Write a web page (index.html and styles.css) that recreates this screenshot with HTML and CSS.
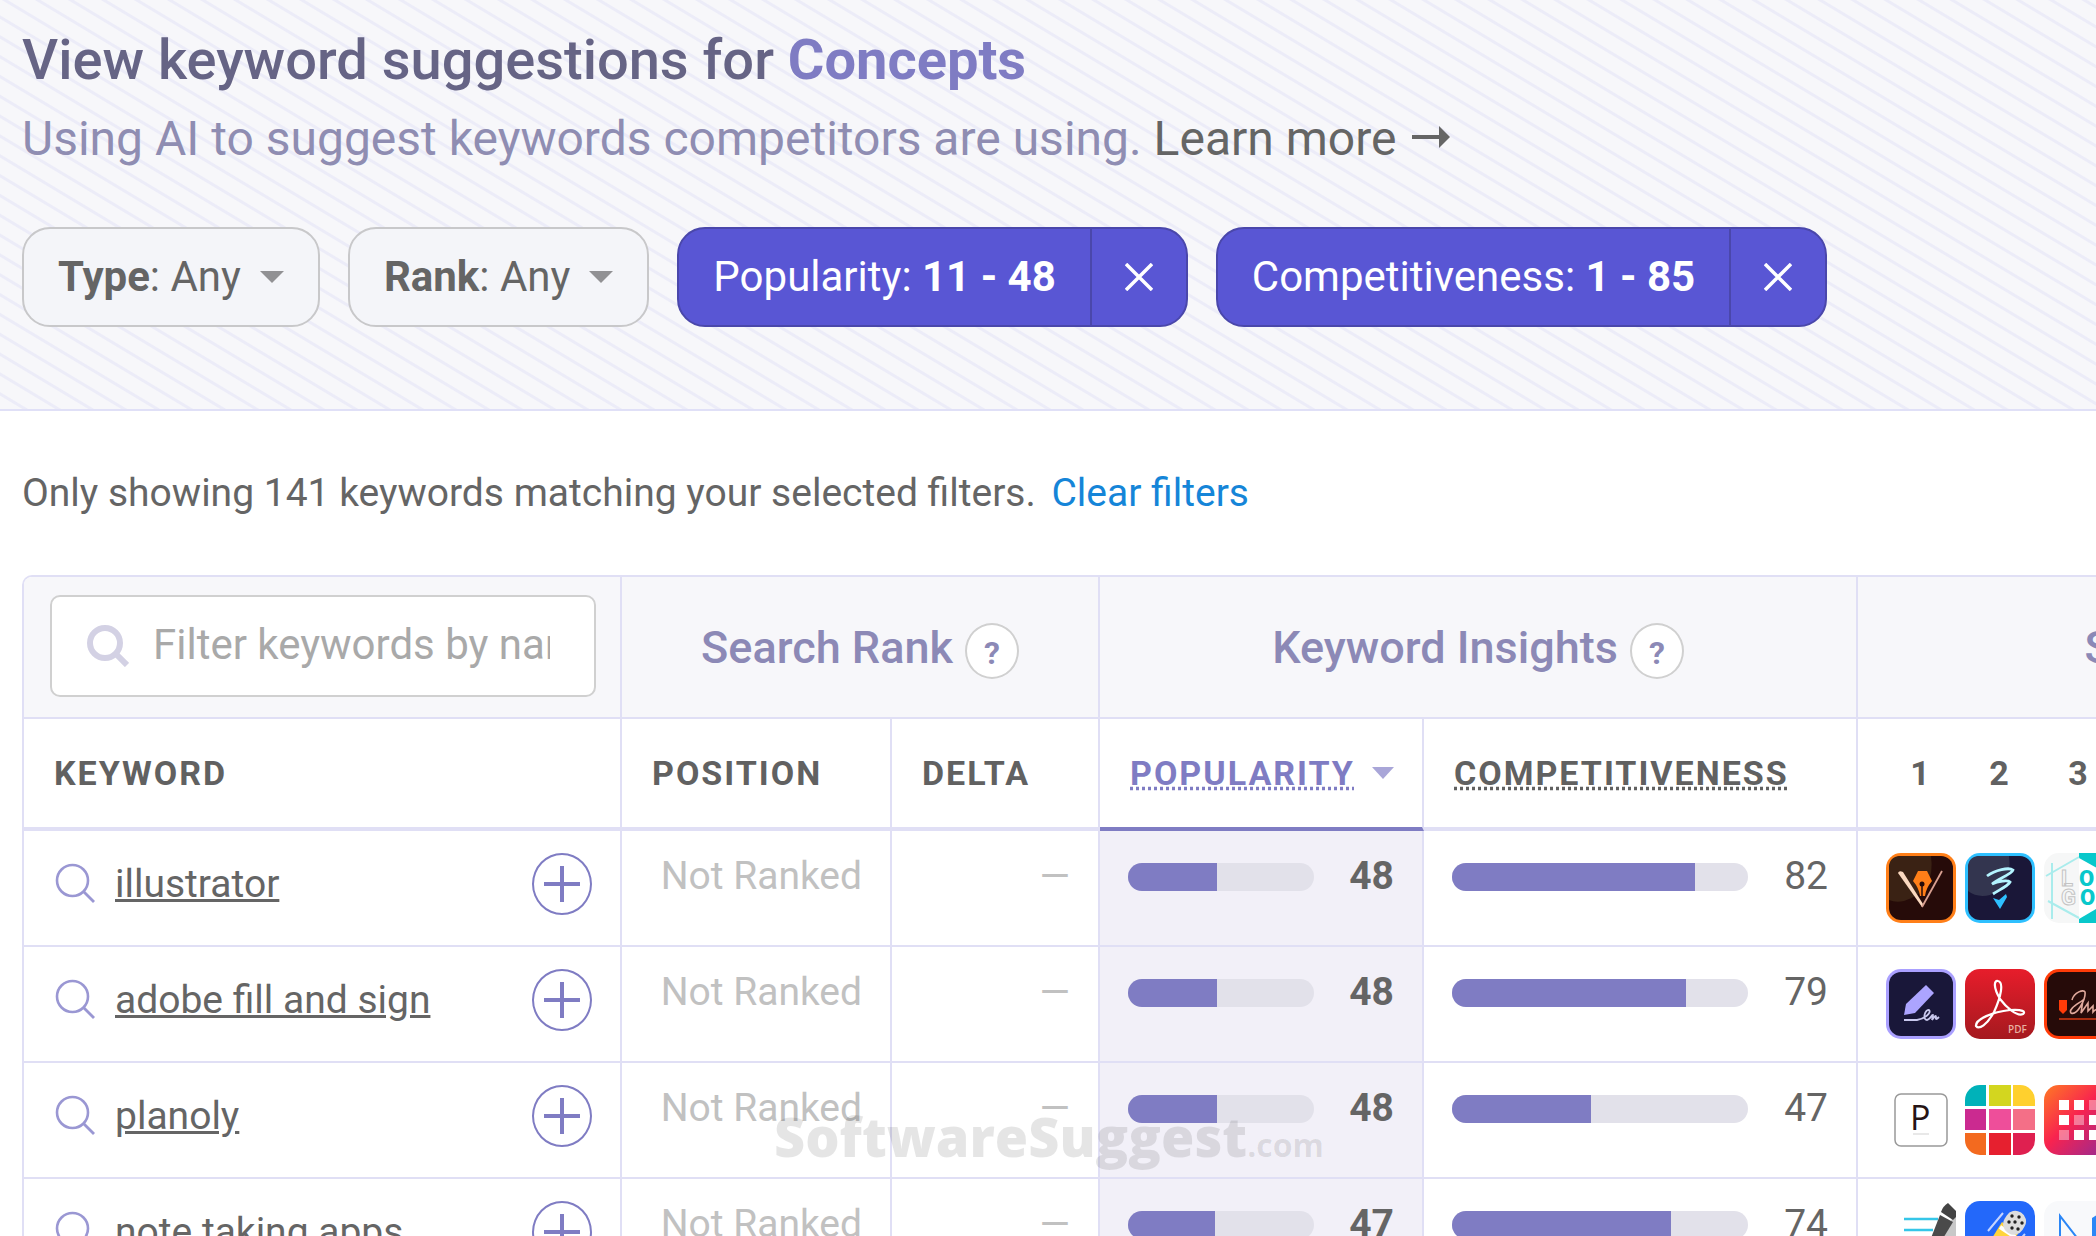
FILE: index.html
```html
<!DOCTYPE html>
<html lang="en">
<head>
<meta charset="utf-8">
<title>Keyword suggestions</title>
<link rel="stylesheet" href="styles.css">
</head>
<body>
<svg class="sprite" aria-hidden="true">
  <symbol id="search" viewBox="0 0 40 40"><circle cx="17.500" cy="17.500" r="15.500" fill="none" stroke="currentColor" stroke-width="2.600"/><path d="M28.500 28.500 39 39" stroke="currentColor" stroke-width="2.800"/></symbol>
  <symbol id="plus" viewBox="0 0 36 36"><path d="M18 0V36M0 18H36" stroke="currentColor" stroke-width="4"/></symbol>
  <symbol id="close" viewBox="0 0 28 28"><path d="M1 1 27 27M27 1 1 27" stroke="currentColor" stroke-width="3.500"/></symbol>
</svg>
<header class="hero">
  <h1>View keyword suggestions for <strong>Concepts</strong></h1>
  <p class="lead">Using AI to suggest keywords competitors are using. <a href="#learn">Learn more <svg class="arrow" viewBox="0 0 38 22"><path d="M0 11H28" stroke="currentColor" stroke-width="4"/><path d="M27 0 38 11 27 22z" fill="currentColor"/></svg></a></p>
  <div class="filters">
    <button class="pill"><span><b>Type</b>: Any</span><i class="caret"></i></button>
    <button class="pill"><span><b>Rank</b>: Any</span><i class="caret"></i></button>
    <div class="chip"><button>Popularity: <b>11 - 48</b></button><button class="remove" aria-label="Remove popularity filter"><svg><use href="#close"/></svg></button></div>
    <div class="chip"><button>Competitiveness: <b>1 - 85</b></button><button class="remove" aria-label="Remove competitiveness filter"><svg><use href="#close"/></svg></button></div>
  </div>
</header>
<main>
  <p class="summary">Only showing 141 keywords matching your selected filters. <a href="#clear">Clear filters</a></p>
  <div class="table-wrap">
  <table>
    <colgroup><col class="c-key"><col class="c-pos"><col class="c-delta"><col class="c-pop"><col class="c-comp"><col class="c-apps"></colgroup>
    <thead>
      <tr class="groups">
        <th class="filter-cell"><label class="search-box"><svg viewBox="0 0 42 42"><circle cx="18" cy="18" r="15" fill="none" stroke="currentColor" stroke-width="6"/><path d="M28 28 40 40" stroke="currentColor" stroke-width="6"/></svg><input type="text" placeholder="Filter keywords by name" aria-label="Filter keywords by name"></label></th>
        <th colspan="2"><div class="group">Search Rank <button class="help">?</button></div></th>
        <th colspan="2"><div class="group">Keyword Insights <button class="help">?</button></div></th>
        <th><div class="group">Search Results <button class="help">?</button></div></th>
      </tr>
      <tr class="labels">
        <th>KEYWORD</th><th>POSITION</th><th>DELTA</th>
        <th class="sorted"><div class="sort"><abbr>POPULARITY</abbr><i class="caret"></i></div></th>
        <th><abbr>COMPETITIVENESS</abbr></th>
        <th class="ranks"><div class="apps"><span>1</span><span>2</span><span>3</span></div></th>
      </tr>
    </thead>
    <tbody>
      <tr>
        <td><div class="keyword"><svg class="lens"><use href="#search"/></svg><a href="#k1">illustrator</a><button class="add" aria-label="Add keyword"><svg><use href="#plus"/></svg></button></div></td>
        <td class="muted">Not Ranked</td><td class="muted">—</td>
        <td class="sorted"><div class="meter"><span class="bar"><i style="width:48%"></i></span><b>48</b></div></td>
        <td><div class="meter"><span class="bar"><i style="width:82%"></i></span><span>82</span></div></td>
        <td><div class="apps">
          <svg viewBox="0 0 70 70"><rect width="70" height="70" rx="15" fill="#ff7f18"/><rect x="3" y="3" width="64" height="64" rx="12" fill="#260b09"/><path d="M15 3H45Q50 38 18 48 10 50 3 47V15Q3 3 15 3z" fill="#3a2214"/><path d="M12 20Q13 17 17 19L37 51 36 54z" fill="#fbd9c0"/><path d="M36 54 56 18" stroke="#d9a091" stroke-width="1.800"/><path d="M32 18H41L46 28Q40 35 39 43H34Q33 35 27 28z" fill="#ff7f18"/><path d="M36 31V43" stroke="#260b09" stroke-width="1.500"/><circle cx="36" cy="31" r="2.500" fill="#260b09"/></svg>
          <svg viewBox="0 0 70 70"><rect width="70" height="70" rx="15" fill="#2ec0ff"/><rect x="3" y="3" width="64" height="64" rx="12" fill="#1a1738"/><path d="M15 3H44Q48 32 25 42 12 45 3 38V15Q3 3 15 3z" fill="#33354f"/><path d="M22 23C30 17 44 14 48 17 47 21 33 26 27 31 33 28 43 27 45 29 43 33 34 37 28 41" fill="none" stroke="#b4f4ff" stroke-width="2.800"/><path d="M28 45 34 47 41 41 42 44 35 56z" fill="#2ec0ff"/></svg>
          <svg viewBox="0 0 70 70"><rect width="70" height="70" rx="15" fill="#f6f7f7"/><path d="M35 0H55Q70 0 70 15V55Q70 70 55 70H35z" fill="#09c8cb"/><path d="M35 5 62 20V50L35 66z" fill="#fff"/><path d="M2 23 35 4M4 48 35 65M8 10V66" stroke="#a9ecec" stroke-width="2"/><text x="17" y="33" class="logo-outline">L</text><text x="17" y="52" class="logo-outline">G</text><text x="35" y="33" class="logo-solid">O</text><text x="36" y="52" class="logo-solid">O</text></svg>
        </div></td>
      </tr>
      <tr>
        <td><div class="keyword"><svg class="lens"><use href="#search"/></svg><a href="#k2">adobe fill and sign</a><button class="add" aria-label="Add keyword"><svg><use href="#plus"/></svg></button></div></td>
        <td class="muted">Not Ranked</td><td class="muted">—</td>
        <td class="sorted"><div class="meter"><span class="bar"><i style="width:48%"></i></span><b>48</b></div></td>
        <td><div class="meter"><span class="bar"><i style="width:79%"></i></span><span>79</span></div></td>
        <td><div class="apps">
          <svg viewBox="0 0 70 70"><rect width="70" height="70" rx="15" fill="#aaa0ff"/><rect x="3" y="3" width="64" height="64" rx="12" fill="#191739"/><path d="M18 46 20 35 40 16 48 24 29 44z" fill="#aca4ff"/><path d="M18 51H31C38 50 46 44 43 41 39 40 36 51 41 51 44 51 46 45 47 46L46 51Q50 45 50 48 49 52 53 48" fill="none" stroke="#c9c8ed" stroke-width="1.800"/></svg>
          <svg viewBox="0 0 70 70"><defs><linearGradient id="pdf" x2="0" y2="1"><stop offset="0" stop-color="#e71d2b"/><stop offset="1" stop-color="#a5191f"/></linearGradient></defs><rect width="70" height="70" rx="15" fill="url(#pdf)"/><path d="M35 30C28 18 29 11 33 12 39 13 36 28 29 43 22 56 14 61 11 57 10 50 28 43 45 41 58 40 61 43 58 45 52 48 41 38 35 30z" fill="none" stroke="#fff" stroke-width="2.200"/><text x="43" y="64" class="pdf-label">PDF</text></svg>
          <svg viewBox="0 0 70 70"><rect width="70" height="70" rx="15" fill="#ff3b08"/><rect x="3" y="3" width="64" height="64" rx="12" fill="#260b09"/><path d="M15 31H23V41L19 45 15 41z" fill="#ff3b08"/><path d="M15 50H65" stroke="#a82d10" stroke-width="2"/><path d="M28 31C30 23 40 20 41 23 42 30 33 47 27 44 24 40 34 35 39 31L37 44 44 34V42L49 37V43Q53 38 57 43" fill="none" stroke="#e0a99c" stroke-width="1.600"/></svg>
        </div></td>
      </tr>
      <tr>
        <td><div class="keyword"><svg class="lens"><use href="#search"/></svg><a href="#k3">planoly</a><button class="add" aria-label="Add keyword"><svg><use href="#plus"/></svg></button></div></td>
        <td class="muted">Not Ranked</td><td class="muted">—</td>
        <td class="sorted"><div class="meter"><span class="bar"><i style="width:48%"></i></span><b>48</b></div></td>
        <td><div class="meter"><span class="bar"><i style="width:47%"></i></span><span>47</span></div></td>
        <td><div class="apps">
          <svg viewBox="0 0 70 70"><rect x="9" y="9" width="52" height="52" rx="6" fill="#fff" stroke="#999" stroke-width="1.500"/><text x="24" y="45" class="p-letter">P</text><path d="M27 49H43" stroke="#e8e8e8" stroke-width="2"/></svg>
          <svg viewBox="0 0 70 70"><defs><clipPath id="tile"><rect width="70" height="70" rx="15"/></clipPath></defs><g clip-path="url(#tile)"><path fill="#fff" d="M0 0H70V70H0z"/><path fill="#00b2b9" d="M0 0H21V21H0z"/><path fill="#d3d61f" d="M24 0H46V21H24z"/><path fill="#ffd02e" d="M48 0H70V21H48z"/><path fill="#cb2a90" d="M0 24H21V45H0z"/><path fill="#ee4e9a" d="M24 24H46V45H24z"/><path fill="#f46f87" d="M48 24H70V45H48z"/><path fill="#f36a1f" d="M0 48H21V70H0z"/><path fill="#e6202f" d="M24 48H46V70H24z"/><path fill="#df2050" d="M48 48H70V70H48z"/></g></svg>
          <svg viewBox="0 0 70 70"><defs><linearGradient id="dots" x2="1" y2="1"><stop offset="0" stop-color="#ff7a24"/><stop offset=".45" stop-color="#f8234f"/><stop offset="1" stop-color="#8b2a9b"/></linearGradient></defs><rect width="70" height="70" rx="15" fill="url(#dots)"/><g fill="#fff"><path d="M15 15h10v10H15zM30 15h10v10H30zM15 30h10v10H15zM45 30h10v10H45zM30 45h10v10H30zM45 45h10v10H45z"/><path opacity=".4" d="M45 15h10v10H45zM30 30h10v10H30zM15 45h10v10H15z"/></g></svg>
        </div></td>
      </tr>
      <tr>
        <td><div class="keyword"><svg class="lens"><use href="#search"/></svg><a href="#k4">note taking apps</a><button class="add" aria-label="Add keyword"><svg><use href="#plus"/></svg></button></div></td>
        <td class="muted">Not Ranked</td><td class="muted">—</td>
        <td class="sorted"><div class="meter"><span class="bar"><i style="width:47%"></i></span><b>47</b></div></td>
        <td><div class="meter"><span class="bar"><i style="width:74%"></i></span><span>74</span></div></td>
        <td><div class="apps">
          <svg viewBox="0 0 70 70"><path d="M66 18 70 14V60H40z" fill="#c8c8c8"/><path d="M18 18H52M18 29H47M18 40H42" stroke="#35c6e8" stroke-width="2.500"/><path d="M54 14 67 21 42 62 36 60z" fill="#4a4a4a"/><path d="M55 11Q57 5 62 2L70 10V16L67 19z" fill="#444"/></svg>
          <svg viewBox="0 0 70 70"><rect width="70" height="70" rx="15" fill="#2368fa"/><path d="M38 12 23 30M60 33 50 44" stroke="#c5d4ff" stroke-width="2"/><path d="M37 21 53 33 28 62 14 58z" fill="#ffd43c"/><path d="M35 26 50 36" stroke="#fff" stroke-width="4"/><rect x="39" y="10" width="21" height="24" rx="10" transform="rotate(32 50 22)" fill="#ddd"/><g fill="#222"><circle cx="47" cy="15" r="1.700"/><circle cx="54" cy="16" r="1.700"/><circle cx="44" cy="21" r="1.700"/><circle cx="50" cy="21" r="1.700"/><circle cx="57" cy="22" r="1.700"/><circle cx="47" cy="27" r="1.700"/><circle cx="53" cy="28" r="1.700"/></g></svg>
          <svg viewBox="0 0 70 70"><rect width="70" height="70" rx="15" fill="#f8f9fb"/><path d="M16 56V15L48 56" fill="none" stroke="#2b86f6" stroke-width="2"/><path d="M48 56V17L56 12V56z" fill="#2b86f6"/></svg>
        </div></td>
      </tr>
    </tbody>
  </table>
  </div>
</main>
<div class="watermark">SoftwareSuggest<small>.com</small></div>
</body>
</html>
```
FILE: styles.css
```css
* { box-sizing: border-box; }
html { overflow: hidden; }
body { margin: 0; font-family: Roboto, "Liberation Sans", sans-serif; font-size: 39px; line-height: 48px; color: #656565; background: #fff; height: 100vh; overflow: hidden; position: relative; }
button, input { font: inherit; color: inherit; }
button { background: none; border: 0; padding: 0; margin: 0; cursor: pointer; }
a { color: inherit; text-decoration: none; }
i { font-style: normal; }
.sprite { display: none; }

.hero { padding: 24px 22px 82px; border-bottom: 2px solid #e0e0f7; background: repeating-linear-gradient(31deg, #f7f7fa 0, #f7f7fa 11px, #ececf8 12px, #ececf8 14px, #f7f7fa 15px, #f7f7fa 17px); }
h1 { margin: 0; font-size: 56px; line-height: 72px; font-weight: 500; color: #666485; }
h1 strong { font-weight: 700; color: #7f7cc3; }
.lead { margin: 9px 0 0; font-size: 48px; line-height: 68px; color: #8f8db2; }
.lead a { color: #656565; }
.arrow { width: 38px; height: 22px; margin-left: 4px; vertical-align: 7px; }
.filters { display: flex; gap: 28px; margin-top: 54px; font-size: 42px; }
.pill, .chip { height: 100px; border-radius: 28px; display: flex; align-items: center; }
.pill { border: 2px solid #c8c8ca; background: #f4f5f9; padding: 0 34px; gap: 19px; }
.caret { border: 12px solid transparent; border-top-color: #919194; border-bottom: 0; }
.chip { border: 2px solid #4a47ab; background: #5956d4; color: #fff; }
.chip button { height: 96px; padding: 0 34px; }
.chip .remove { border-left: 2px solid #4a47ab; padding: 0 33px; display: flex; align-items: center; }
.remove svg { width: 28px; height: 28px; }

main { padding: 57px 0 0 22px; }
.summary { margin: 0; line-height: 50px; }
.summary a { color: #1585d8; margin-left: 6px; }
.table-wrap { margin-top: 57px; border: 2px solid #e0dff5; border-right: 0; border-radius: 10px 0 0 0; overflow: hidden; }
table { border-collapse: separate; border-spacing: 0; table-layout: fixed; width: 2656px; }
.c-key { width: 598px; } .c-pos { width: 270px; } .c-delta { width: 208px; } .c-pop { width: 324px; } .c-comp { width: 434px; }
th, td { padding: 0 28px; border-right: 2px solid #e0dff5; border-bottom: 2px solid #e0dff5; text-align: left; }
.groups th { height: 142px; padding-top: 2px; background: #f7f7fa; color: #8c89b6; font-size: 45px; font-weight: 500; }
.groups .filter-cell { padding: 0 24px 2px 26px; }
.search-box { display: flex; align-items: center; height: 102px; background: #fff; border: 2px solid #d0d0d0; border-radius: 10px; padding: 0 44px 0 35px; gap: 24px; }
.search-box svg { width: 42px; height: 42px; color: #d3d1e4; flex: none; }
.search-box input { flex: 1; min-width: 0; border: 0; padding: 0 0 2px; outline: 0; background: none; font-weight: 400; font-size: 42px; }
.search-box input::placeholder { color: #a9a9a9; opacity: 1; }
.group { display: flex; justify-content: center; align-items: center; gap: 12px; }
.help { width: 54px; height: 56px; margin-top: 6px; padding-top: 4px; border: 2px solid #d0d0d0; border-radius: 50%; background: #fff; font-size: 32px; line-height: 48px; font-weight: 700; }
.labels th { height: 112px; padding-left: 30px; border-bottom-width: 4px; font-size: 34px; font-weight: 700; letter-spacing: 2px; color: #616161; }
.labels .ranks { padding-left: 28px; }
.labels .sorted { border-bottom-color: #7f7cc3; color: #7f7cc3; }
abbr { text-decoration: underline dotted; }
.sort { display: flex; align-items: center; justify-content: space-between; }
.sort .caret { border-top-color: #a9a6d8; border-left-width: 11px; border-right-width: 11px; }
td { height: 116px; padding-top: 21px; vertical-align: top; }
.muted { text-align: right; color: #c1c1c1; }
td.sorted { background: #f2f0f8; }
.keyword { display: flex; align-items: center; height: 62px; margin-top: 1px; }
.keyword a { margin-left: 20px; text-decoration: underline; }
.lens { width: 40px; height: 40px; color: #9a97d3; margin: 0 0 2px 3px; }
.add { width: 60px; height: 62px; margin-left: auto; border: 2px solid #7f7cc3; border-radius: 50%; color: #7f7cc3; display: flex; align-items: center; justify-content: center; }
.add svg { width: 36px; height: 36px; }
.meter { display: grid; grid-template-columns: 1fr 80px; align-items: center; text-align: right; }
.bar { height: 28px; margin-top: 2px; border-radius: 14px; background: #e2e1ea; overflow: hidden; display: flex; }
.bar i { background: #7f7cc3; }
.meter b { font-weight: 700; }
.apps { display: flex; gap: 9px; }
.apps svg { width: 70px; height: 70px; flex: none; }
td .apps { margin-top: 1px; }
.apps span { width: 70px; text-align: center; }
.logo-outline { font: 700 22px Roboto, sans-serif; fill: #f6f7f7; stroke: #c4c4c4; stroke-width: 1px; }
.logo-solid { font: 900 22px Roboto, sans-serif; fill: #09c8cb; }
.pdf-label { font: 600 10px "Open Sans", sans-serif; fill: #e8b0a0; }
.p-letter { font: 500 34px "Open Sans", sans-serif; fill: #261415; }
.watermark { position: absolute; left: 774px; top: 1100px; line-height: 72px; font-family: "Open Sans", sans-serif; font-weight: 800; font-size: 54px; color: rgba(0, 0, 0, .1); pointer-events: none; white-space: nowrap; }
.watermark small { font-size: 32px; font-weight: 700; }
```
